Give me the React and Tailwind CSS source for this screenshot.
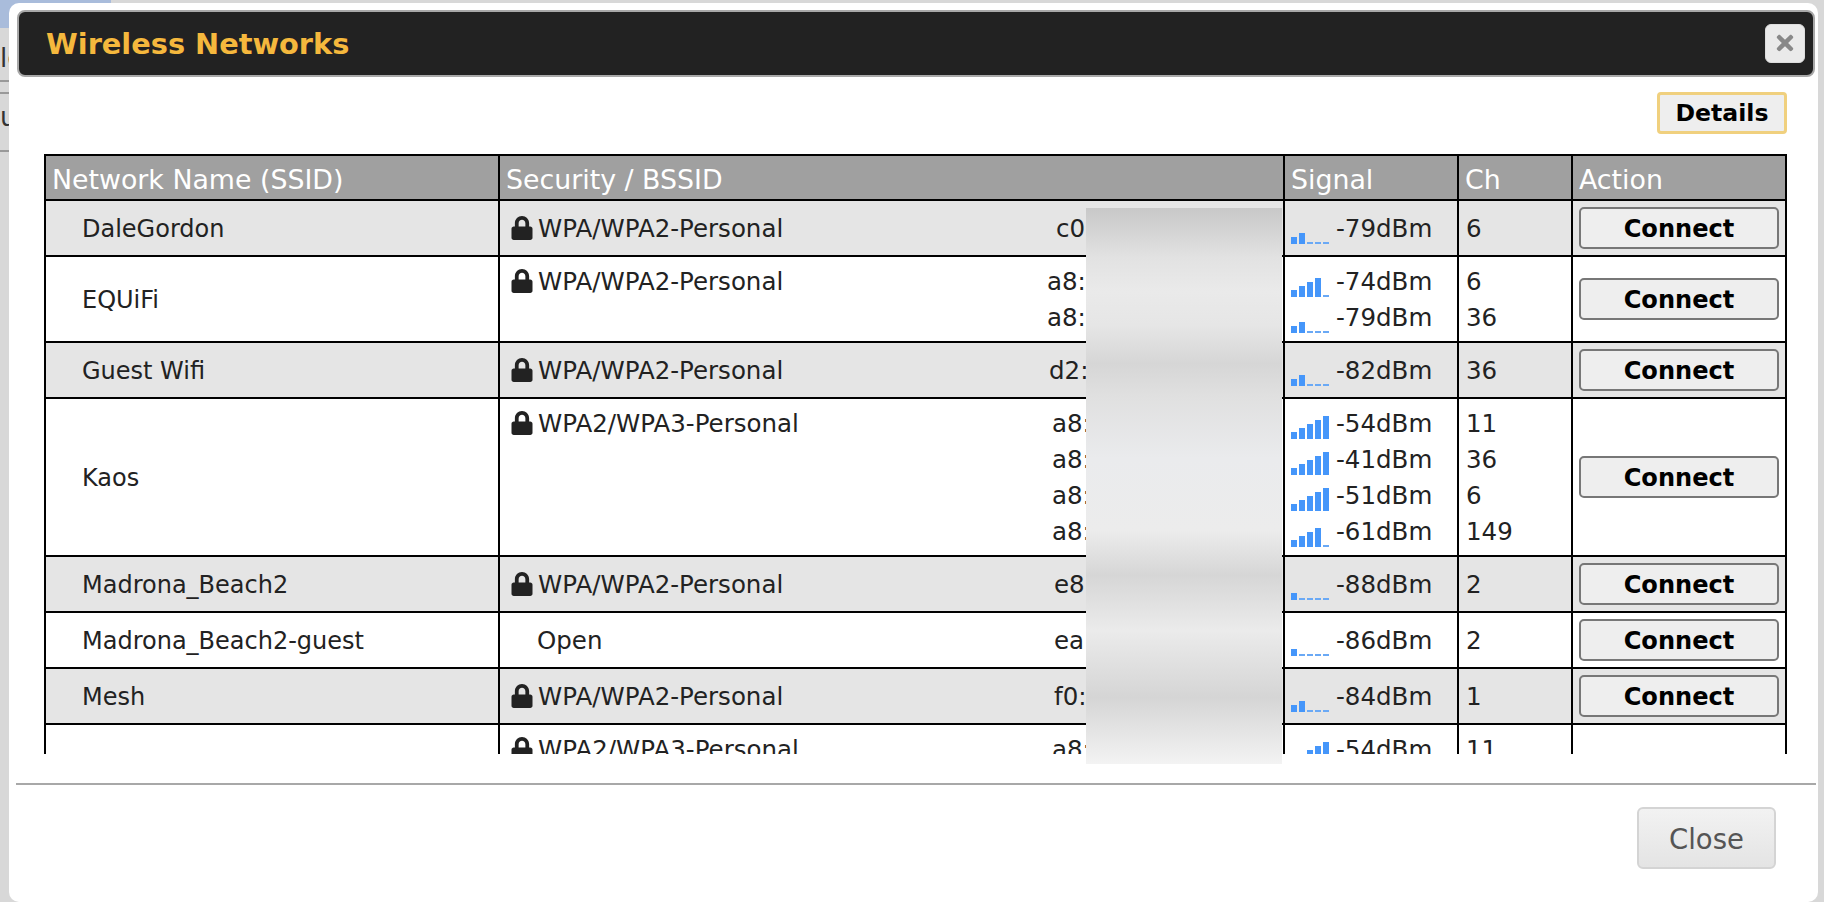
import React from 'react';
import { FaLock, FaTimes } from 'react-icons/fa';

const LOCKED_WPA2 = 'WPA/WPA2-Personal';
const LOCKED_WPA3 = 'WPA2/WPA3-Personal';

const networks = [
    { name: 'DaleGordon', security: LOCKED_WPA2, indent: 'ml-[10px]', ap: [['c0', 2, '-79dBm', '6']] },
    { name: 'EQUiFi', security: LOCKED_WPA2, indent: 'ml-[1px]', ap: [['a8:', 4, '-74dBm', '6'], ['a8:', 2, '-79dBm', '36']] },
    { name: 'Guest Wifi', security: LOCKED_WPA2, indent: 'ml-[3px]', ap: [['d2:', 2, '-82dBm', '36']] },
    { name: 'Kaos', security: LOCKED_WPA3, indent: 'ml-[6px]', ap: [['a8:', 5, '-54dBm', '11'], ['a8:', 5, '-41dBm', '36'], ['a8:', 5, '-51dBm', '6'], ['a8:', 4, '-61dBm', '149']] },
    { name: 'Madrona_Beach2', security: LOCKED_WPA2, indent: 'ml-[8px]', ap: [['e8', 1, '-88dBm', '2']] },
    { name: 'Madrona_Beach2-guest', security: 'Open', indent: 'ml-[8px]', ap: [['ea', 1, '-86dBm', '2']] },
    { name: 'Mesh', security: LOCKED_WPA2, indent: 'ml-[8px]', ap: [['f0:', 2, '-84dBm', '1']] },
    { name: '', security: LOCKED_WPA3, indent: 'ml-[6px]', ap: [['a8:', 5, '-54dBm', '11'], ['a8:', 5, '-41dBm', '36'], ['a8:', 5, '-51dBm', '6'], ['a8:', 4, '-61dBm', '149']] },
];

const BAR_HEIGHTS = [7, 11, 15, 19, 23];

const SignalBars = ({ level }) => (
    <svg width="38" height="23" viewBox="0 0 38 23" className="shrink-0 mb-[2px] self-end">
        {BAR_HEIGHTS.map((h, i) => {
            const height = i < level ? h : 2;
            return <rect key={i} x={i * 8} y={23 - height} width="6" height={height} fill={i < level ? '#4596fa' : '#6aa9f5'} />;
        })}
    </svg>
);

const App = () => {
    return (
        <div className="relative h-screen overflow-hidden bg-[#d8d8d8] font-['DejaVu_Sans',sans-serif]">
            {/* page behind the dialog */}
            <div className="h-[28px] w-[111px] bg-[#a9bcdb]"></div>
            <div className="w-[9px] overflow-hidden">
                <p className="h-[40px] text-[26px] leading-[60px] text-[#333] whitespace-nowrap">ld</p>
                <div className="mt-[12px] h-[2px] bg-[#999]"></div>
                <div className="mt-[10px] h-[2px] bg-[#999]"></div>
                <p className="h-[46px] text-[26px] leading-[46px] text-[#333] whitespace-nowrap">ut</p>
                <div className="mt-[10px] h-[2px] bg-[#999]"></div>
            </div>

            <div className="absolute left-[9px] top-[3px] w-[1809px] h-[899px] flex flex-col bg-white rounded-[10px]">
                <div className="mt-[7px] ml-[8px] mr-[3px] h-[67px] flex items-center justify-between rounded-[8px] border-2 border-[#a8a8a8] bg-[#222] pl-[27px] pr-[8px]">
                    <h1 className="mt-[2px] text-[28.8px] font-bold text-[#f5b83d]">Wireless Networks</h1>
                    <button className="w-[40px] h-[39px] mb-[1px] flex items-center justify-center rounded-[6px] border border-[#ddd] bg-[#eaeaea] text-[#888]">
                        <FaTimes size={24} />
                    </button>
                </div>

                <div className="mt-[15px] mr-[31px] flex justify-end">
                    <button className="w-[130px] h-[42px] rounded-[4px] border-[3px] border-[#f0d07e] bg-[#eee] pt-[1px] text-[23.6px] font-bold text-black">Details</button>
                </div>

                <div className="mt-[20px] ml-[35px] mr-[31px] h-[600px] overflow-hidden">
                    <table className="w-[1743px] table-fixed border-collapse border-2 border-black text-[24.5px] text-[#222]">
                        <colgroup>
                            <col className="w-[454px]" />
                            <col className="w-[785px]" />
                            <col className="w-[174px]" />
                            <col className="w-[114px]" />
                            <col className="w-[214px]" />
                        </colgroup>
                        <thead>
                            <tr className="h-[45px] bg-[#a0a0a0] text-left text-[26.8px] leading-[36px] font-normal text-white">
                                <th className="border-2 border-black pl-[6px] pt-[4px] font-normal">Network Name (SSID)</th>
                                <th className="border-2 border-black pl-[6px] pt-[4px] font-normal">Security / BSSID</th>
                                <th className="border-2 border-black pl-[6px] pt-[4px] font-normal">Signal</th>
                                <th className="border-2 border-black pl-[6px] pt-[4px] font-normal">Ch</th>
                                <th className="border-2 border-black pl-[6px] pt-[4px] font-normal">Action</th>
                            </tr>
                        </thead>
                        <tbody>
                            {networks.map((net, idx) => (
                                <tr key={idx} className={idx % 2 === 0 ? 'bg-[#e5e5e5]' : 'bg-white'}>
                                    <td className="border-2 border-black pl-[36px] pt-[8px] pb-[6px] text-[24px]">{net.name}</td>
                                    <td className="border-2 border-black pl-[10px] py-[6px]">
                                        <div className="flex">
                                            <div className="w-[536px] h-[36px] flex items-center gap-[4px]">
                                                {net.security === 'Open' ? <span className="w-[23px]"></span> : <FaLock size={24} className="text-[#222]" />}
                                                <span className="pt-[2px]">{net.security}</span>
                                            </div>
                                            <div className={net.indent}>
                                                {net.ap.map((ap, i) => <div key={i} className="h-[36px] pt-[1px] leading-[36px]">{ap[0]}</div>)}
                                            </div>
                                        </div>
                                    </td>
                                    <td className="border-2 border-black pl-[6px] py-[6px]">
                                        {net.ap.map((ap, i) => (
                                            <div key={i} className="h-[36px] flex items-center gap-[7px]">
                                                <SignalBars level={ap[1]} />
                                                <span className="pt-[2px]">{ap[2]}</span>
                                            </div>
                                        ))}
                                    </td>
                                    <td className="border-2 border-black pl-[7px] py-[6px]">
                                        {net.ap.map((ap, i) => <div key={i} className="h-[36px] pt-[1px] leading-[36px]">{ap[3]}</div>)}
                                    </td>
                                    <td className="border-2 border-black pl-[6px] py-[6px]">
                                        <button className="block w-[200px] h-[42px] rounded-[5px] border-2 border-[#777] bg-[#eee] pt-[2px] text-[24.1px] font-bold text-black">Connect</button>
                                    </td>
                                </tr>
                            ))}
                        </tbody>
                    </table>
                </div>

                <div className="mt-[29px] ml-[7px] mr-[2px] h-[2px] bg-[#a8a8a8]"></div>

                <div className="mt-[22px] mr-[42px] flex justify-end">
                    <button className="w-[139px] h-[62px] rounded-[6px] border-2 border-[#d4d4d4] bg-gradient-to-b from-[#f2f2f2] to-[#e4e4e4] pt-[4px] text-[27.5px] text-[#555]">Close</button>
                </div>

                {/* blurred-out MAC addresses */}
                <div className="absolute left-[1077px] top-[205px] w-[196px] h-[556px] bg-[linear-gradient(180deg,#c8c8c8_0%,#e2e2e2_9%,#eaeaea_15%,#e6e6e6_21%,#d6d6d6_28%,#e0e0e0_34%,#eaebed_45%,#ececec_58%,#d6d6d6_66%,#ebebeb_76%,#d5d5d5_88%,#f3f3f3_100%)]"></div>
            </div>
        </div>
    );
};

export default App;
